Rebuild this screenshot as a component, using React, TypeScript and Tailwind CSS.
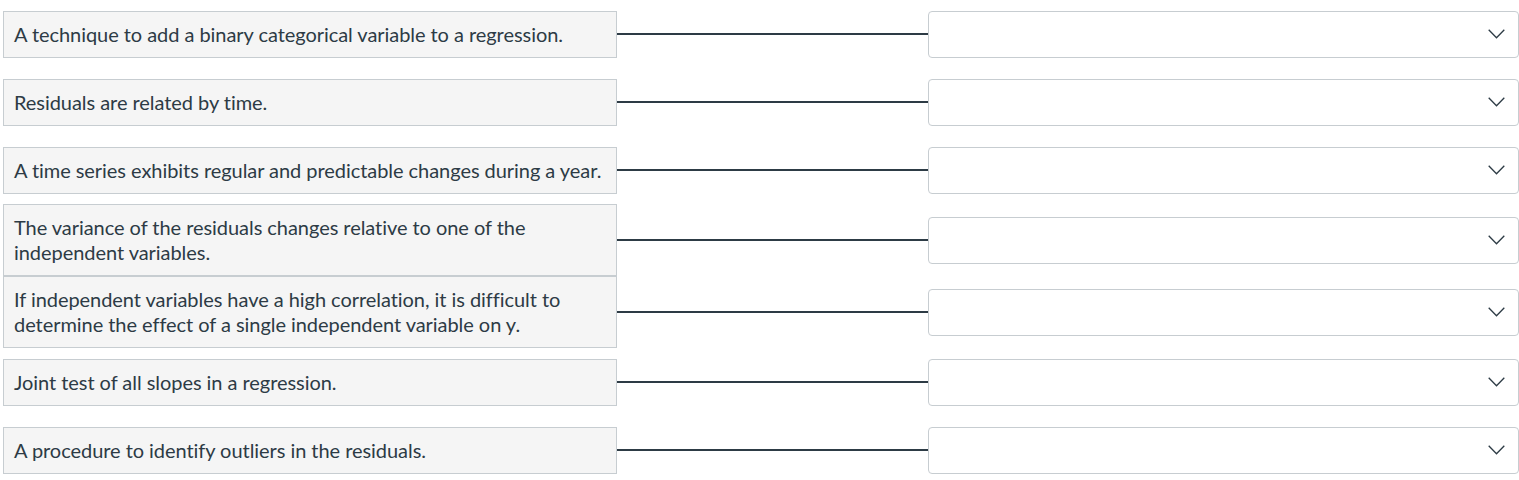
const prompts = [
  'A technique to add a binary categorical variable to a regression.',
  'Residuals are related by time.',
  'A time series exhibits regular and predictable changes during a year.',
  'The variance of the residuals changes relative to one of the independent variables.',
  'If independent variables have a high correlation, it is difficult to determine the effect of a single independent variable on y.',
  'Joint test of all slopes in a regression.',
  'A procedure to identify outliers in the residuals.',
]

function Chevron() {
  return (
    <svg width="17" height="10" viewBox="0 0 17 10" fill="none" className="text-[#2d3b45]">
      <polyline points="0.7,0.7 8.5,8.8 16.3,0.7" stroke="currentColor" strokeWidth="1.3" />
    </svg>
  )
}

function MatchRow({ text }: { text: string }) {
  return (
    <div className="flex min-h-[68px] items-center">
      <div className="ml-[3px] w-[614px] shrink-0 border border-[#c7cdd1] bg-[#f5f5f5] px-[10px] py-[10px] text-[20px] leading-[25px] tracking-[-0.05px] text-[#2d3b45]">
        {text}
      </div>
      <div className="h-[2px] flex-1 bg-[#2d3b45]" />
      <div className="flex h-[47px] w-[591px] shrink-0 items-center justify-end rounded-[4px] border border-[#c7cdd1] bg-white pr-[13px]">
        <Chevron />
      </div>
    </div>
  )
}

export default function App() {
  return (
    <div className="w-[1519px] bg-white font-['Lato',sans-serif]">
      {prompts.map((p) => (
        <MatchRow key={p} text={p} />
      ))}
    </div>
  )
}
